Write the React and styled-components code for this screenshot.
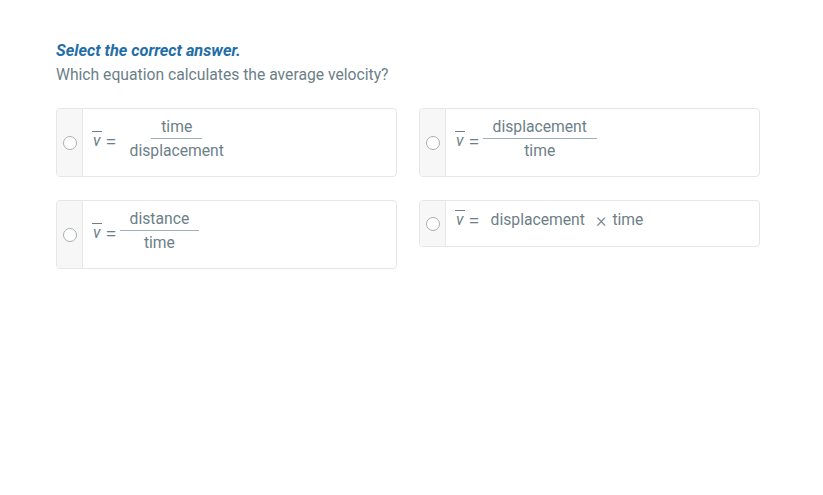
import React from 'react';
import styled, { createGlobalStyle } from 'styled-components';

const GlobalStyle = createGlobalStyle`
  body {
    margin: 0;
    background: #ffffff;
    font-family: Roboto, "Open Sans", sans-serif;
  }
`;

const Page = styled.div`
  width: 704px;
  padding: 41px 0 0 56px;
`;

const Title = styled.div`
  font-size: 16.3px;
  font-weight: 700;
  font-style: italic;
  color: #1f6ea8;
  line-height: 20px;
`;

const Question = styled.div`
  font-size: 15.7px;
  color: #6c7f88;
  line-height: 20px;
  margin-top: 4px;
`;

const Grid = styled.div`
  display: grid;
  grid-template-columns: 341px 341px;
  column-gap: 22px;
  row-gap: 23px;
  margin-top: 23px;
  align-items: start;
`;

const Card = styled.div`
  display: flex;
  border: 1px solid #e4e7e8;
  border-radius: 4px;
  background: #fff;
  overflow: hidden;
`;

const Strip = styled.div`
  width: 25px;
  flex: none;
  display: flex;
  align-items: center;
  justify-content: center;
  background: #f7f7f7;
  border-right: 1px solid #e8e8e8;
`;

const Radio = styled.span`
  width: 12px;
  height: 12px;
  border-radius: 50%;
  border: 1px solid #a9afb2;
  background: #fff;
`;

const Body = styled.div`
  flex: 1;
  display: flex;
  align-items: center;
  padding: ${(p) => (p.$flat ? '9px 10px 16px 9px' : '8px 10px 15px 9px')};
  color: #6c7f88;
  font-size: 15.7px;
  line-height: 20px;
`;

const Velocity = styled.span`
  display: inline-flex;
  align-items: center;
  margin-top: ${(p) => (p.$flat ? '0' : '4px')};
`;

const V = styled.span`
  position: relative;
  font-style: italic;
  font-size: 16px;
  padding: 0 1px;

  &::before {
    content: '';
    position: absolute;
    left: 0;
    right: 0;
    top: 0;
    border-top: 1px solid #6c7f88;
  }
`;

const Eq = styled.span`
  margin: 0 2px 0 4px;
  font-size: 20px;
  font-weight: 300;
  line-height: 20px;
`;

const Fraction = styled.span`
  display: inline-flex;
  flex-direction: column;
  align-items: center;
  margin-left: 1px;
`;

const Num = styled.span`
  padding: 0 10px 1px;
  border-bottom: 1px solid #9fb0b6;
`;

const Den = styled.span`
  padding: 2px 10px 0;
`;

const Term = styled.span`
  margin-left: 9px;
`;

const Times = styled.span`
  margin: 0 6px 0 11px;
  font-size: 20px;
  font-weight: 300;
  line-height: 20px;
`;

function Lhs({ flat }) {
  return (
    <Velocity $flat={flat}>
      <V>v</V>
      <Eq>=</Eq>
    </Velocity>
  );
}

function FractionOption({ top, bottom }) {
  return (
    <Card>
      <Strip>
        <Radio />
      </Strip>
      <Body>
        <Lhs />
        <Fraction>
          <Num>{top}</Num>
          <Den>{bottom}</Den>
        </Fraction>
      </Body>
    </Card>
  );
}

export default function App() {
  return (
    <>
      <GlobalStyle />
      <Page>
        <Title>Select the correct answer.</Title>
        <Question>Which equation calculates the average velocity?</Question>
        <Grid>
          <FractionOption top="time" bottom="displacement" />
          <FractionOption top="displacement" bottom="time" />
          <FractionOption top="distance" bottom="time" />
          <Card>
            <Strip>
              <Radio />
            </Strip>
            <Body $flat>
              <Lhs flat />
              <Term>displacement</Term>
              <Times>×</Times>
              <span>time</span>
            </Body>
          </Card>
        </Grid>
      </Page>
    </>
  );
}
